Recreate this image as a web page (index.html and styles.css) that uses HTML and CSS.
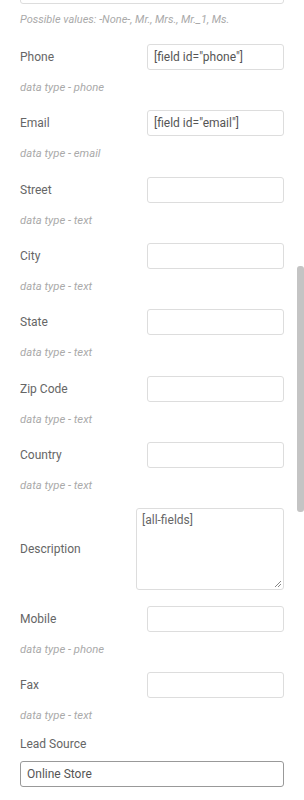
FILE: index.html
```html
<!DOCTYPE html>
<html>
<head>
<meta charset="utf-8">
<link rel="stylesheet" href="styles.css">
</head>
<body>
<div class="form">
  <div class="top-select"></div>
  <div class="hint">Possible values: -None-, Mr., Mrs., Mr._1, Ms.</div>

  <div class="group">
    <div class="field"><span class="label">Phone</span><div class="input">[field id="phone"]</div></div>
    <div class="desc">data type - phone</div>
  </div>
  <div class="group">
    <div class="field"><span class="label">Email</span><div class="input">[field id="email"]</div></div>
    <div class="desc">data type - email</div>
  </div>
  <div class="group">
    <div class="field"><span class="label">Street</span><div class="input"></div></div>
    <div class="desc">data type - text</div>
  </div>
  <div class="group">
    <div class="field"><span class="label">City</span><div class="input"></div></div>
    <div class="desc">data type - text</div>
  </div>
  <div class="group">
    <div class="field"><span class="label">State</span><div class="input"></div></div>
    <div class="desc">data type - text</div>
  </div>
  <div class="group">
    <div class="field"><span class="label">Zip Code</span><div class="input"></div></div>
    <div class="desc">data type - text</div>
  </div>
  <div class="group">
    <div class="field"><span class="label">Country</span><div class="input"></div></div>
    <div class="desc">data type - text</div>
  </div>
  <div class="group">
    <div class="field"><span class="label">Description</span>
      <div class="textarea">[all-fields]
        <svg class="grip" width="8" height="8" viewBox="0 0 8 8"><path d="M7 1 L1 7 M7 4 L4 7" stroke="#888" stroke-width="1" fill="none"/></svg>
      </div>
    </div>
  </div>
  <div class="group">
    <div class="field"><span class="label">Mobile</span><div class="input"></div></div>
    <div class="desc">data type - phone</div>
  </div>
  <div class="group last">
    <div class="field"><span class="label">Fax</span><div class="input"></div></div>
    <div class="desc">data type - text</div>
  </div>
  <div class="label block">Lead Source</div>
  <div class="select">Online Store</div>
</div>
<div class="scrollbar"></div>
</body>
</html>
```
FILE: styles.css
```css
html, body {
  margin: 0;
  padding: 0;
  background: #fff;
}
body {
  font-family: Roboto, "Liberation Sans", sans-serif;
  width: 304px;
  height: 800px;
  overflow: hidden;
  position: relative;
}
.form {
  padding: 0 20px;
}
.top-select {
  height: 26px;
  margin-top: -22px;
  border: 1px solid #ddd;
  border-radius: 3px;
  box-sizing: border-box;
}
.hint {
  margin-top: 8px;
  font-size: 11px;
  line-height: 16px;
  font-style: italic;
  color: #aaa;
}
.hint + .group {
  margin-top: 16px;
}
.group {
  margin-bottom: 14.33px;
}
.group.last {
  margin-bottom: 12px;
}
.field {
  display: flex;
  align-items: center;
  justify-content: space-between;
}
.label {
  font-size: 12px;
  line-height: 16px;
  color: #666;
}
.label.block {
  display: block;
}
.input {
  width: 137px;
  height: 26px;
  box-sizing: border-box;
  border: 1px solid #ddd;
  border-radius: 3px;
  padding: 0 6px;
  font-size: 12px;
  line-height: 24px;
  color: #555;
  white-space: nowrap;
  overflow: hidden;
}
.textarea {
  position: relative;
  width: 148px;
  height: 82px;
  box-sizing: border-box;
  border: 1px solid #ddd;
  border-radius: 3px;
  padding: 3px 5px;
  font-size: 12px;
  line-height: 16px;
  color: #666;
}
.group:has(.textarea) {
  margin-bottom: 15.33px;
}
.grip {
  position: absolute;
  right: 1px;
  bottom: 1px;
}
.desc {
  margin-top: 10px;
  font-size: 11.3px;
  line-height: 16px;
  font-style: italic;
  color: #aaa;
}
.select {
  margin-top: 9px;
  height: 26px;
  box-sizing: border-box;
  border: 1px solid #999;
  border-radius: 3px;
  padding: 0 6px;
  font-size: 12px;
  line-height: 24px;
  color: #555;
}
.scrollbar {
  position: absolute;
  right: 0;
  top: 266px;
  width: 7px;
  height: 246px;
  border-radius: 3px;
  background: #c4c4c4;
}
```
